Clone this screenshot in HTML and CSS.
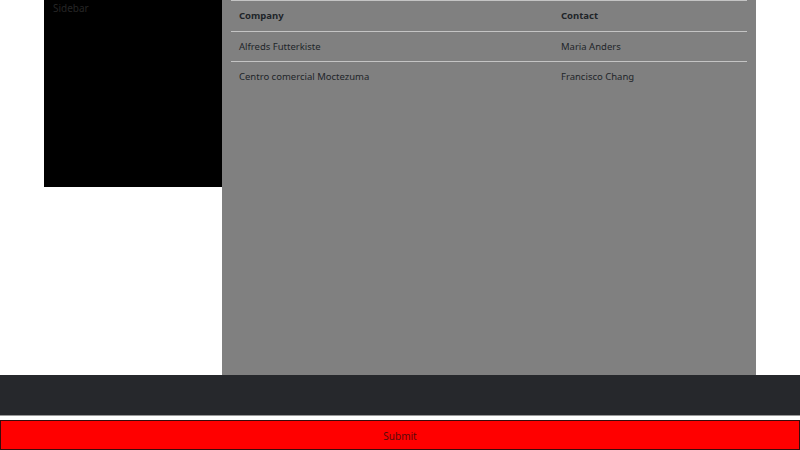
FILE: index.html
```html
<!DOCTYPE html>
<html>
<head>
<meta charset="utf-8">
<link rel="stylesheet" href="styles.css">
</head>
<body>
<div class="layout">
  <aside class="sidebar">Sidebar</aside>
  <main class="main">
    <table class="table">
      <thead>
        <tr><th class="col1">Company</th><th>Contact</th></tr>
      </thead>
      <tbody>
        <tr><td>Alfreds Futterkiste</td><td>Maria Anders</td></tr>
        <tr><td>Centro comercial Moctezuma</td><td>Francisco Chang</td></tr>
      </tbody>
    </table>
  </main>
</div>
<footer class="footer"></footer>
<div class="actions">
  <button class="submit">Submit</button>
</div>
</body>
</html>
```
FILE: styles.css
```css
html, body {
  margin: 0;
  padding: 0;
  background: #fff;
  font-family: "Noto Sans", "Open Sans", sans-serif;
  font-size: 9.5px;
  color: #212529;
}
.layout {
  width: 712px;
  margin: 0 auto;
  display: flex;
  align-items: flex-start;
  height: 375px;
}
.sidebar {
  width: 178px;
  height: 187px;
  background: #000;
  color: #262626;
  padding: 1px 9px 0;
  box-sizing: border-box;
  font-size: 10px;
  line-height: 14px;
}
.main {
  width: 534px;
  height: 375px;
  background: #808080;
  padding: 0 9px;
  box-sizing: border-box;
}
.table {
  width: 100%;
  border-collapse: collapse;
  border-top: 1px solid #c4c4c4;
}
.table th, .table td {
  text-align: left;
  padding: 7px 8px;
  line-height: 15.5px;
  vertical-align: middle;
}
.table th {
  font-weight: 700;
  border-bottom: 1px solid #c4c4c4;
}
.table .col1 { width: 306px; }
.table tbody tr:first-child td {
  border-bottom: 1px solid #c4c4c4;
}
.footer {
  height: 40px;
  background: #26282c;
  border-bottom: 1px solid #9a9a9a;
}
.actions {
  padding-top: 4px;
}
.submit {
  display: block;
  width: 100%;
  height: 30px;
  margin: 0;
  background: #ff0000;
  border: 1px solid #3a0b0b;
  color: #5a0a0a;
  font-family: "Noto Sans", "Open Sans", sans-serif;
  font-size: 10px;
  padding: 1px 0 0;
}
```
